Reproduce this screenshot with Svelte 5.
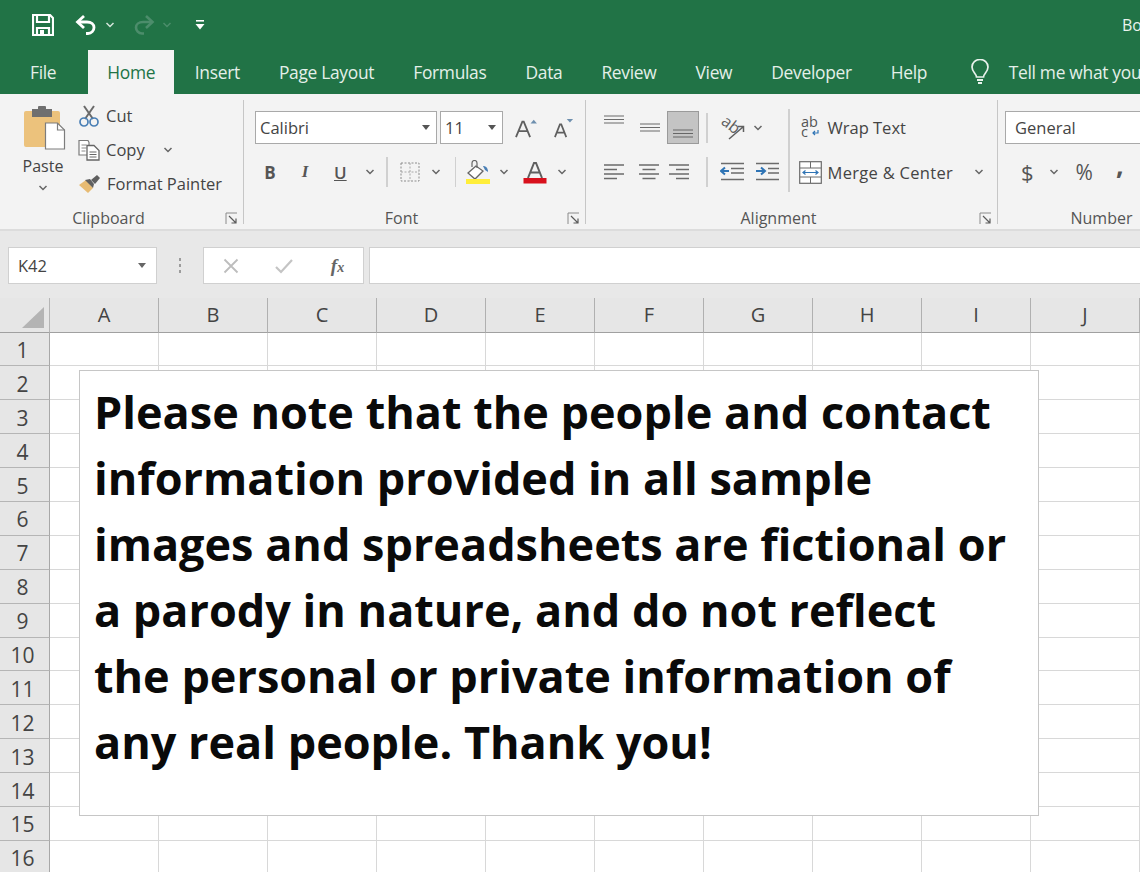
<script>
  const tabs = ["Insert", "Page Layout", "Formulas", "Data", "Review", "View", "Developer", "Help"];
  const cols = ["A", "B", "C", "D", "E", "F", "G", "H", "I", "J"];
  const rows = Array.from({ length: 16 }, (_, i) => i + 1);
  const noteLines = [
    "Please note that the people and contact",
    "information provided in all sample",
    "images and spreadsheets are fictional or",
    "a parody in nature, and do not reflect",
    "the personal or private information of",
    "any real people. Thank you!",
  ];
</script>

{#snippet chevron(cls = "")}
  <svg class="chevron {cls}" viewBox="0 0 10 6" width="10" height="6"><path d="M1.5 1 5 4.5 8.5 1" fill="none" stroke="currentColor" stroke-width="1.5" /></svg>
{/snippet}

{#snippet launcher()}
  <svg class="launcher" viewBox="0 0 13 13" width="13" height="13">
    <path d="M1 12V1h11" fill="none" stroke="#8a8a8a" stroke-width="1" />
    <path d="M4 4l7 7M11 6.5V11H6.5" fill="none" stroke="#5a5a5a" stroke-width="1.2" />
  </svg>
{/snippet}

<div class="page">
  <header class="titlebar">
    <div class="qat">
      <svg class="q-save" viewBox="0 0 22 22" width="22" height="22">
        <path d="M1 1h17l3 3v17H1z" fill="none" stroke="#fff" stroke-width="2.2" />
        <path d="M5 2v6h12V2" fill="none" stroke="#fff" stroke-width="2.2" />
        <path d="M5 21v-7h12v7" fill="none" stroke="#fff" stroke-width="2.2" />
        <rect x="8" y="16" width="4" height="5" fill="#fff" />
      </svg>
      <svg class="q-undo" viewBox="0 0 22 22" width="22" height="22">
        <path d="M9 2 2.5 8 9 14" fill="none" stroke="#fff" stroke-width="2.8" />
        <path d="M3 8h9c4.5 0 7 2.5 7 5.5s-2.5 6-6 6h-2" fill="none" stroke="#fff" stroke-width="2.8" />
      </svg>
      {@render chevron("q-c1")}
      <svg class="q-redo" viewBox="0 0 22 22" width="22" height="22">
        <path d="M13 2l6.5 6L13 14" fill="none" stroke="#4c8d6b" stroke-width="2.6" />
        <path d="M19 8h-9c-4.5 0-7 2.5-7 5.5s2.5 6 6 6h2" fill="none" stroke="#4c8d6b" stroke-width="2.6" />
      </svg>
      {@render chevron("q-c2")}
      <svg class="q-more" viewBox="0 0 10 12" width="10" height="12">
        <rect x="1" y="1" width="8" height="1.6" fill="#fff" />
        <path d="M0.5 5h9L5 10.5z" fill="#fff" />
      </svg>
    </div>
    <span class="doc-title">Bo</span>
  </header>

  <nav class="tabs">
    <span class="tab file">File</span>
    <span class="tab home">Home</span>
    {#each tabs as tab}
      <span class="tab">{tab}</span>
    {/each}
    <svg class="bulb" viewBox="0 0 20 26" width="20" height="26">
      <path d="M6.5 18c0-3-4.5-5-4.5-10a8 7.5 0 0 1 16 0c0 5-4.5 7-4.5 10z" fill="none" stroke="#e8f2ec" stroke-width="1.7" />
      <path d="M7 21h6M8 24h4" stroke="#e8f2ec" stroke-width="1.8" />
    </svg>
    <span class="tell">Tell me what you</span>
  </nav>

  <section class="ribbon">
    <div class="group clipboard">
      <div class="group-body clip-body">
        <div class="paste">
          <svg viewBox="0 0 42 44" width="42" height="44">
            <rect x="0" y="5" width="36" height="36" rx="2" fill="#ecc27c" />
            <rect x="8" y="3" width="20" height="8" fill="#6f6f6f" />
            <rect x="14" y="0" width="8" height="5" rx="1" fill="#6f6f6f" />
            <path d="M21.5 17h12l7 7v19h-19z" fill="#fff" stroke="#7d7d7d" stroke-width="1.2" />
            <path d="M33.5 17v7h7" fill="none" stroke="#7d7d7d" stroke-width="1.2" />
          </svg>
          <span class="paste-label">Paste</span>
          {@render chevron()}
        </div>
        <div class="clip-list">
          <div class="clip-item">
            <svg viewBox="0 0 22 22" width="22" height="22">
              <path d="M6 1l9 13M16 1 7 14" stroke="#6a6a6a" stroke-width="2" fill="none" />
              <circle cx="6" cy="17" r="4" fill="none" stroke="#4a7fb5" stroke-width="1.7" />
              <circle cx="16" cy="17" r="4" fill="none" stroke="#4a7fb5" stroke-width="1.7" />
            </svg>
            <span>Cut</span>
          </div>
          <div class="clip-item">
            <svg viewBox="0 0 22 22" width="22" height="22">
              <path d="M1 1.5h9l1 2V16H1z" fill="#fff" stroke="#7b7b7b" stroke-width="1.2" />
              <path d="M3.5 6h5M3.5 9h5M3.5 12h4" stroke="#8a8a8a" />
              <path d="M9 6.5h7l5 5V21H9z" fill="#fff" stroke="#666" stroke-width="1.3" />
              <path d="M11.5 13h7M11.5 15.5h7M11.5 18h7" stroke="#666" />
            </svg>
            <span>Copy</span>
            {@render chevron("copy-c")}
          </div>
          <div class="clip-item">
            <svg viewBox="0 0 23 20" width="23" height="20">
              <path d="M1 11l7-5 7 8-5 5z" fill="#e7bb73" />
              <path d="M7 6l5-1 4 5-1 4z" fill="#5f5f5f" />
              <path d="M13 6l6-5 3 3-5 6z" fill="#5f5f5f" />
            </svg>
            <span>Format Painter</span>
          </div>
        </div>
      </div>
      <div class="group-label"><span>Clipboard</span>{@render launcher()}</div>
    </div>

    <div class="group font">
      <div class="group-body">
        <div class="font-row1">
          <div class="combo family"><span>Calibri</span><i class="caret"></i></div>
          <div class="combo size"><span>11</span><i class="caret"></i></div>
          <svg class="grow" viewBox="0 0 24 22" width="22" height="20">
            <path d="M1 21 8 4h1.5l7 17M4.5 14.5h9" fill="none" stroke="#5f5f5f" stroke-width="2" />
            <path d="M17 6l3.5-4L24 6z" fill="#6e8fae" />
          </svg>
          <svg class="shrink" viewBox="0 0 22 22" width="20" height="20">
            <path d="M1 21 6.5 7H8l5.5 14M3.5 16h8" fill="none" stroke="#5f5f5f" stroke-width="1.9" />
            <path d="M14 1h7l-3.5 4z" fill="#6e8fae" />
          </svg>
        </div>
        <div class="font-row2">
          <span class="fmt bold">B</span>
          <span class="fmt italic">I</span>
          <span class="fmt under">U</span>
          {@render chevron("c-under")}
          <i class="vsep sep-a"></i>
          <svg viewBox="0 0 20 20" width="20" height="20">
            <rect x="1" y="1" width="18" height="18" fill="none" stroke="#8c8c8c" stroke-dasharray="2 1.5" />
            <path d="M10 1v18M1 10h18" stroke="#a8a8a8" stroke-dasharray="2 1.5" />
          </svg>
          {@render chevron("c-border")}
          <i class="vsep sep-b"></i>
          <svg viewBox="0 0 26 24" width="26" height="24">
            <path d="M11 6 3 13l7 6 8-8z" fill="#fff" stroke="#666" stroke-width="1.3" />
            <path d="M7 7V3a2.5 2.5 0 0 1 5 0v5" fill="none" stroke="#666" stroke-width="1.2" />
            <path d="M18 6c3 0 5 2 5 6l-3-2z" fill="#4a7fb5" />
            <rect x="1" y="19" width="24" height="5.5" fill="#ffee3a" />
          </svg>
          {@render chevron("c-fill")}
          <svg class="font-color" viewBox="0 0 24 24" width="24" height="24">
            <path d="M5 18 11 3h2l6 15M7.5 12.5h9" fill="none" stroke="#5f5f5f" stroke-width="2" />
            <rect x="0.5" y="18" width="23" height="5.5" fill="#d8101c" />
          </svg>
          {@render chevron("c-color")}
        </div>
      </div>
      <div class="group-label"><span>Font</span>{@render launcher()}</div>
    </div>

    <div class="group alignment">
      <div class="group-body align-body">
        <div class="align-grid">
          <svg class="a-top" viewBox="0 0 22 10" width="22" height="10"><path d="M1 1h20M1 4.5h20M1 8h20" stroke="#6b6b6b" stroke-width="1.2" /></svg>
          <svg class="a-mid" viewBox="0 0 22 10" width="22" height="10"><path d="M1 1h20M1 4.5h20M1 8h20" stroke="#6b6b6b" stroke-width="1.2" /></svg>
          <div class="a-bottom"><svg viewBox="0 0 22 10" width="22" height="10"><path d="M1 1h20M1 4.5h20M1 8h20" stroke="#666" stroke-width="1.2" /></svg></div>
          <i class="vsep"></i>
          <div class="orient">
            <svg viewBox="0 0 26 24" width="26" height="24">
              <text x="1" y="13" transform="rotate(38 9 9)" class="orient-text">ab</text>
              <path d="M9 23 23 11M18 10.5l5.5 0v5.5" fill="none" stroke="#5f5f5f" stroke-width="1.5" />
            </svg>
            {@render chevron()}
          </div>

          <svg viewBox="0 0 22 16" width="22" height="16"><path d="M1 1h20M1 5.5h13M1 10h20M1 14.5h13" stroke="#6b6b6b" stroke-width="1.3" /></svg>
          <svg viewBox="0 0 22 16" width="22" height="16"><path d="M1 1h20M4.5 5.5h13M1 10h20M4.5 14.5h13" stroke="#6b6b6b" stroke-width="1.3" /></svg>
          <svg viewBox="0 0 22 16" width="22" height="16"><path d="M1 1h20M8 5.5h13M1 10h20M8 14.5h13" stroke="#6b6b6b" stroke-width="1.3" /></svg>
          <i class="vsep"></i>
          <div class="indents">
            <svg viewBox="0 0 25 20" width="25" height="20">
              <path d="M1 1.5h23M11 6.5h13M11 11h13M1 17.5h23" stroke="#6b6b6b" stroke-width="1.3" />
              <path d="M1 9h8M5 5.5 1 9l4 3.5" fill="none" stroke="#2f74b5" stroke-width="2" />
            </svg>
            <svg viewBox="0 0 25 20" width="25" height="20">
              <path d="M1 1.5h23M13 6.5h11M13 11h11M1 17.5h23" stroke="#6b6b6b" stroke-width="1.3" />
              <path d="M1 9h9M6 5.5 10 9l-4 3.5" fill="none" stroke="#2f74b5" stroke-width="2" />
            </svg>
          </div>
        </div>
        <i class="vsep tall"></i>
        <div class="wrap-list">
          <div class="wrap-item">
            <svg viewBox="0 0 20 22" width="20" height="22">
              <text x="0" y="11" class="ab-text">ab</text>
              <text x="0" y="21" class="ab-text">c</text>
              <path d="M17 14v3h-5M14 15l-2 2 2 2" fill="none" stroke="#2f74b5" stroke-width="1.2" />
            </svg>
            <span>Wrap Text</span>
          </div>
          <div class="wrap-item merge">
            <svg viewBox="0 0 23 23" width="23" height="23">
              <rect x="0.7" y="0.7" width="21.6" height="21.6" fill="#fff" stroke="#6b6b6b" stroke-width="1.2" />
              <path d="M1 7h21M1 16h21M11.5 1v6M11.5 16v6" stroke="#6b6b6b" />
              <path d="M4 11.5h15M6.5 9.5l-2.5 2 2.5 2M16.5 9.5l2.5 2-2.5 2" fill="none" stroke="#2f74b5" stroke-width="1.2" />
            </svg>
            <span>Merge &amp; Center</span>
            {@render chevron("merge-c")}
          </div>
        </div>
      </div>
      <div class="group-label"><span>Alignment</span>{@render launcher()}</div>
    </div>

    <div class="group number">
      <div class="group-body">
        <div class="combo general"><span>General</span></div>
        <div class="num-row">
          <span class="dollar">$</span>
          {@render chevron()}
          <span class="percent">%</span>
          <span class="comma">,</span>
        </div>
      </div>
      <div class="group-label"><span>Number</span></div>
    </div>
  </section>

  <section class="formula-bar">
    <div class="name-box"><span>K42</span><i class="caret"></i></div>
    <div class="grip"><i></i><i></i><i></i></div>
    <div class="fx-box">
      <svg viewBox="0 0 16 16" width="16" height="16"><path d="M1.5 1.5l13 13M14.5 1.5l-13 13" stroke="#bdbdbd" stroke-width="1.8" /></svg>
      <svg viewBox="0 0 20 16" width="20" height="16"><path d="M2 9l5 5L18 2" fill="none" stroke="#c4c4c4" stroke-width="2.2" /></svg>
      <span class="fx">f<small>x</small></span>
    </div>
    <div class="formula-input"></div>
  </section>

  <section class="sheet">
    <div class="grid">
      <div class="corner"><i></i></div>
      {#each cols as c}
        <div class="col-head">{c}</div>
      {/each}
      {#each rows as r}
        <div class="row-head">{r}</div>
        {#each cols as c}
          <div class="cell"></div>
        {/each}
      {/each}
    </div>
    <div class="note">
      {#each noteLines as line}
        <p>{line}</p>
      {/each}
    </div>
  </section>
</div>

<style>
  :global(body) {
    margin: 0;
    background: #fff;
  }

  .page {
    position: relative;
    width: 1140px;
    height: 872px;
    overflow: hidden;
    font-family: "Open Sans", "Noto Sans", sans-serif;
    color: #444;
  }

  .chevron {
    flex: none;
    color: #666;
  }

  .titlebar {
    height: 50px;
    background: #217346;
    display: flex;
    align-items: center;
    justify-content: space-between;
  }

  .qat {
    display: flex;
    align-items: center;
    padding-left: 32px;
  }

  .q-undo {
    margin-left: 21px;
  }

  .q-redo {
    margin-left: 18px;
  }

  .q-more {
    margin-left: 23px;
  }

  .q-c1 {
    margin-left: 8px;
    color: #d5e6dc;
  }

  .q-c2 {
    margin-left: 7px;
    color: #4c8d6b;
  }

  .doc-title {
    color: #eaf3ee;
    font-size: 16px;
    width: 18px;
    white-space: nowrap;
  }

  .tabs {
    height: 44px;
    background: #217346;
    display: flex;
    align-items: stretch;
    padding-left: 10px;
    white-space: nowrap;
  }

  .tab {
    display: flex;
    align-items: center;
    flex: none;
    padding: 0 19.5px;
    color: #e4f0e9;
    font-size: 17.4px;
    letter-spacing: -0.3px;
  }

  .tab.file {
    padding: 0 20px;
    margin-right: 12px;
  }

  .tab.home {
    background: #f3f3f3;
    color: #217346;
    padding: 0 19px;
    margin-right: 1px;
  }

  .bulb {
    flex: none;
    align-self: center;
    margin-left: 23px;
  }

  .tell {
    flex: none;
    align-self: center;
    margin-left: 19px;
    color: #e4f0e9;
    font-size: 17.4px;
    letter-spacing: -0.3px;
  }

  .ribbon {
    height: 137px;
    box-sizing: border-box;
    background: #f3f3f3;
    border-bottom: 2px solid #dcdcdc;
    display: flex;
    font-size: 16.5px;
  }

  .group {
    display: flex;
    flex-direction: column;
    box-sizing: border-box;
    flex: none;
    margin-top: 6px;
    margin-bottom: 5px;
  }

  .group:not(.number) {
    border-right: 1.5px solid #c6c6c6;
  }

  .clipboard {
    width: 244px;
  }

  .font {
    width: 342px;
    padding-left: 11px;
  }

  .alignment {
    width: 412px;
    padding-left: 17px;
  }

  .number {
    width: 200px;
    padding-left: 7px;
  }

  .group-body {
    flex: 1;
    min-height: 0;
  }

  .group-label {
    height: 12px;
    display: flex;
    align-items: center;
    font-size: 16px;
    color: #555;
  }

  .group-label span {
    flex: 1;
    text-align: center;
  }

  .font .group-label {
    margin-left: -11px;
  }

  .alignment .group-label {
    margin-left: -17px;
  }

  .launcher {
    flex: none;
    margin: 0 5px 0 8px;
  }

  .clip-body {
    display: flex;
  }

  .paste {
    width: 78px;
    padding-top: 6px;
    display: flex;
    flex-direction: column;
    align-items: center;
    box-sizing: border-box;
    margin-left: 4px;
    margin-right: -4px;
  }

  .paste svg:first-child {
    margin-left: 4px;
  }

  .paste-label {
    font-size: 16px;
    line-height: 22px;
    margin-top: 5px;
  }

  .paste .chevron {
    margin-top: 8px;
  }

  .clip-list {
    display: flex;
    flex-direction: column;
    padding-top: 4px;
    gap: 11px;
  }

  .clip-item {
    display: flex;
    align-items: center;
    gap: 6px;
    height: 23px;
    white-space: nowrap;
  }

  .clip-item svg:first-child {
    flex: none;
  }

  .copy-c {
    margin-left: 12px;
  }

  .combo {
    background: #fff;
    border: 1.5px solid #a9a9a9;
    box-sizing: border-box;
    height: 33px;
    display: flex;
    align-items: center;
    justify-content: space-between;
    padding: 0 6px 0 4px;
  }

  .caret {
    display: block;
    width: 0;
    height: 0;
    border-left: 4.5px solid transparent;
    border-right: 4.5px solid transparent;
    border-top: 5px solid #555;
  }

  .font-row1 {
    display: flex;
    align-items: center;
    margin-top: 11px;
  }

  .family {
    width: 182px;
  }

  .size {
    width: 63px;
    margin-left: 3px;
  }

  .grow {
    margin-left: 12px;
  }

  .shrink {
    margin-left: 17px;
  }

  .font-row2 {
    display: flex;
    align-items: center;
    height: 26px;
    margin-top: 15px;
    padding-left: 9px;
  }

  .font-row2 svg {
    flex: none;
  }

  .fmt {
    font-size: 17px;
    width: 12px;
    text-align: center;
    margin-right: 23px;
    color: #555;
  }

  .bold {
    font-weight: 700;
  }

  .italic {
    font-style: italic;
    font-family: "Liberation Serif", serif;
    font-weight: 700;
  }

  .under {
    text-decoration: underline;
    font-weight: 600;
    margin-right: 19px;
  }

  .vsep {
    display: block;
    flex: none;
    width: 1.5px;
    height: 30px;
    background: #d0d0d0;
  }

  .sep-a {
    margin: 0 12px 0 11px;
  }

  .sep-b {
    margin: 0 9px 0 14px;
  }

  .c-border {
    margin-left: 11px;
  }

  .c-fill {
    margin-left: 8px;
  }

  .font-color {
    margin-left: 14px;
  }

  .c-color {
    margin-left: 10px;
  }

  .align-body {
    display: flex;
  }

  .align-grid {
    display: grid;
    grid-template-columns: 35px 30px 38px 11px auto;
    grid-template-rows: 33px 26px;
    row-gap: 15px;
    margin-top: 11px;
    align-items: center;
    width: 185px;
  }

  .a-top {
    align-self: start;
    margin-top: 4px;
  }

  .a-mid {
    align-self: end;
    margin-bottom: 11px;
    margin-left: 1px;
  }

  .a-bottom {
    width: 32px;
    height: 33px;
    box-sizing: border-box;
    background: #c4c4c4;
    border: 1px solid #9a9a9a;
    display: flex;
    align-items: flex-end;
    justify-content: center;
    padding-bottom: 4px;
    margin-left: -1px;
  }

  .orient {
    display: flex;
    align-items: center;
    gap: 7px;
    padding-left: 3px;
  }

  .orient svg,
  .wrap-item svg {
    overflow: visible;
  }

  .orient-text {
    font-size: 16px;
    fill: #5f5f5f;
  }

  .ab-text {
    font-size: 14.5px;
    fill: #555;
  }

  .indents {
    display: flex;
    gap: 10px;
    padding-left: 3px;
  }

  .vsep.tall {
    height: 83px;
    margin-top: 9px;
  }

  .wrap-list {
    margin-top: 9px;
    padding-left: 9px;
  }

  .wrap-item {
    display: flex;
    align-items: center;
    gap: 7px;
    height: 36px;
    white-space: nowrap;
    padding-left: 2px;
  }

  .merge {
    margin-top: 9px;
    padding-left: 0;
    gap: 6px;
    letter-spacing: 0.3px;
  }

  .merge-c {
    margin-left: 15px;
  }

  .general {
    margin-top: 11px;
    width: 200px;
    padding-left: 9px;
  }

  .num-row {
    display: flex;
    align-items: center;
    height: 26px;
    margin-top: 15px;
    padding-left: 16px;
    font-size: 22px;
    color: #555;
  }

  .num-row .chevron {
    margin-left: 15px;
  }

  .percent {
    margin-left: 17px;
    font-size: 21px;
  }

  .comma {
    margin-left: 23px;
    font-weight: 700;
    font-size: 27px;
    line-height: 12px;
    height: 26px;
  }

  .formula-bar {
    height: 67px;
    box-sizing: border-box;
    background: #e8e8e8;
    padding: 16px 0 14px 8px;
    display: flex;
    align-items: stretch;
  }

  .name-box {
    width: 149px;
    box-sizing: border-box;
    background: #fff;
    border: 1.5px solid #d0d0d0;
    display: flex;
    align-items: center;
    justify-content: space-between;
    padding: 0 10px 0 9px;
    font-size: 16.5px;
  }

  .name-box .caret {
    border-top-color: #666;
  }

  .grip {
    width: 46px;
    display: flex;
    flex-direction: column;
    align-items: center;
    justify-content: center;
    gap: 3.5px;
  }

  .grip i {
    display: block;
    width: 2.5px;
    height: 2.5px;
    background: #9c9c9c;
  }

  .fx-box {
    width: 161px;
    box-sizing: border-box;
    background: #fff;
    border: 1.5px solid #d0d0d0;
    display: grid;
    grid-template-columns: 53px 54px 53px;
    align-items: center;
    justify-items: center;
  }

  .fx {
    font-family: "Liberation Serif", serif;
    font-style: italic;
    font-weight: 700;
    font-size: 19px;
    color: #666;
  }

  .fx small {
    font-size: 14px;
  }

  .formula-input {
    flex: 1;
    margin-left: 5px;
    background: #fff;
    border: 1.5px solid #d0d0d0;
    border-right: 0;
  }

  .sheet {
    position: relative;
  }

  .grid {
    display: grid;
    grid-template-columns: 50px repeat(10, 109px);
    grid-template-rows: 34.5px;
    grid-auto-rows: 33.9px;
    background: #fff;
  }

  .corner {
    background: #e6e6e6;
    border-bottom: 1.5px solid #a0a0a0;
    border-right: 1.5px solid #b5b5b5;
    box-sizing: border-box;
    display: flex;
    align-items: flex-end;
    justify-content: flex-end;
    padding: 0 5px 4px 0;
  }

  .corner i {
    display: block;
    width: 0;
    height: 0;
    border-left: 22px solid transparent;
    border-bottom: 21px solid #b4b4b4;
  }

  .col-head {
    background: #e6e6e6;
    border-bottom: 1.5px solid #a0a0a0;
    border-right: 1.5px solid #b0b0b0;
    box-sizing: border-box;
    display: flex;
    align-items: center;
    justify-content: center;
    font-size: 20px;
    color: #444;
  }

  .row-head {
    background: #e6e6e6;
    border-right: 1.5px solid #a8a8a8;
    border-bottom: 1.5px solid #b5b5b5;
    box-sizing: border-box;
    display: flex;
    align-items: center;
    justify-content: center;
    padding: 2px 4px 0 0;
    font-size: 21px;
    color: #444;
  }

  .cell {
    border-right: 1.5px solid #d8d8d8;
    border-bottom: 1.5px solid #d8d8d8;
    box-sizing: border-box;
  }

  .note {
    position: absolute;
    left: 79px;
    top: 71.5px;
    width: 960px;
    height: 446px;
    box-sizing: border-box;
    background: #fff;
    border: 1.5px solid #c6c6c6;
    padding: 8.5px 0 0 14px;
    font-family: "Open Sans", sans-serif;
    font-weight: 700;
    font-size: 45px;
    color: #0a0a0a;
    white-space: nowrap;
  }

  .note p {
    margin: 0;
    height: 66px;
    line-height: 66px;
  }
</style>
